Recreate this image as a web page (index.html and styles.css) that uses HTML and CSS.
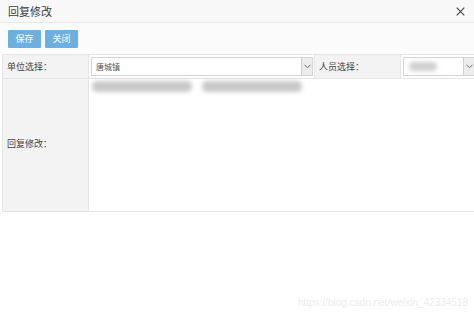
FILE: index.html
```html
<!DOCTYPE html>
<html lang="zh-CN">
<head>
    <meta charset="UTF-8">
    <meta name="viewport" content="width=device-width, initial-scale=1.0">
    <title>回复修改</title>
    <link rel="stylesheet" href="styles.css">
</head>
<body>
    <div class="dialog">
        <div class="title-bar">
            <span class="title">回复修改</span>
            <span class="close"><svg width="9" height="9" viewBox="0 0 9 9"><path d="M0.7 0.7 L8.3 8.3 M8.3 0.7 L0.7 8.3" fill="none" stroke="#444" stroke-width="1.1"/></svg></span>
        </div>
        <div class="toolbar">
            <button class="btn">保存</button>
            <button class="btn">关闭</button>
        </div>
        <div class="form">
            <div class="row row-top">
                <div class="label">单位选择：</div>
                <div class="field">
                    <div class="select">
                        <span class="select-text">唐城镇</span>
                        <span class="arrow"><svg width="7" height="5" viewBox="0 0 7 5"><path d="M0.5 0.8 L3.5 3.8 L6.5 0.8" fill="none" stroke="#666" stroke-width="1"/></svg></span>
                    </div>
                </div>
                <div class="label">人员选择：</div>
                <div class="field">
                    <div class="select select-small">
                        <span class="blur blur-name"></span>
                        <span class="arrow"><svg width="7" height="5" viewBox="0 0 7 5"><path d="M0.5 0.8 L3.5 3.8 L6.5 0.8" fill="none" stroke="#666" stroke-width="1"/></svg></span>
                    </div>
                </div>
            </div>
            <div class="row row-reply">
                <div class="label label-mid">回复修改：</div>
                <div class="reply">
                    <div class="blur-line">
                        <span class="blur" style="width: 100px;"></span>
                        <span class="blur" style="width: 100px;"></span>
                    </div>
                </div>
            </div>
        </div>
        <div class="watermark">https://blog.csdn.net/weixin_42334518</div>
    </div>
</body>
</html>
```

FILE: styles.css
```css
*{
    margin: 0;
    padding: 0;
    box-sizing: border-box;
}
body{
    width: 474px;
    height: 317px;
    overflow: hidden;
    background-color: #fff;
    font-family: "Liberation Sans", "Noto Sans CJK SC", sans-serif;
    color: #333;
}
.dialog{
    height: 317px;
    display: flex;
    flex-direction: column;
}
.title-bar{
    height: 23px;
    background-color: #f8f8f8;
    border-bottom: 1px solid #e8e8e8;
    display: flex;
    align-items: center;
    justify-content: space-between;
    padding: 0 9px 0 8px;
}
.title{
    font-size: 11px;
    color: #3a3a3a;
}
.close{
    display: flex;
    align-items: center;
}
.toolbar{
    height: 31px;
    background-color: #fbfbfb;
    display: flex;
    align-items: center;
    gap: 4px;
    padding: 0 8px;
}
.btn{
    width: 33px;
    height: 18px;
    border: none;
    border-radius: 1px;
    background-color: #6cb0e2;
    color: #fff;
    font-size: 9px;
    font-family: "Noto Sans CJK SC", sans-serif;
}
.form{
    margin-left: 2px;
    width: 480px;
    border-top: 1px solid #e6e6e6;
    border-left: 1px solid #e6e6e6;
}
.row{
    display: grid;
    grid-template-columns: 86px 226px 86px 1fr;
    border-bottom: 1px solid #e6e6e6;
}
.row-top{
    height: 24px;
}
.row-reply{
    grid-template-columns: 86px 1fr;
    height: 133px;
}
.label{
    background-color: #f3f3f3;
    border-right: 1px solid #e6e6e6;
    font-size: 9px;
    color: #444;
    padding-left: 4px;
    display: flex;
    align-items: center;
}
.label-mid{
    padding-bottom: 4px;
}
.field{
    padding: 2px 1px 2px 2px;
    border-right: 1px solid #e6e6e6;
}
.select{
    height: 19px;
    border: 1px solid #d4d4d4;
    display: flex;
    align-items: center;
    justify-content: space-between;
    padding-left: 4px;
    background-color: #fff;
}
.select-text{
    font-size: 8px;
    color: #555;
}
.arrow{
    width: 11px;
    height: 17px;
    background-color: #ececec;
    border-left: 1px solid #cfcfcf;
    display: flex;
    align-items: center;
    justify-content: center;
}
.select-small{
    width: 72px;
}
.blur{
    display: inline-block;
    height: 9px;
    background-color: #cfcfcf;
    border-radius: 5px;
    filter: blur(2px);
}
.blur-name{
    width: 28px;
    margin-left: 1px;
}
.reply{
    padding: 2px 3px;
}
.blur-line{
    display: flex;
    gap: 10px;
}
.blur-line .blur{
    height: 11px;
    background-color: #c9c9c9;
}
.watermark{
    margin-top: auto;
    margin-bottom: 9px;
    align-self: flex-end;
    margin-right: 6px;
    font-size: 10px;
    color: #ececec;
}
```
